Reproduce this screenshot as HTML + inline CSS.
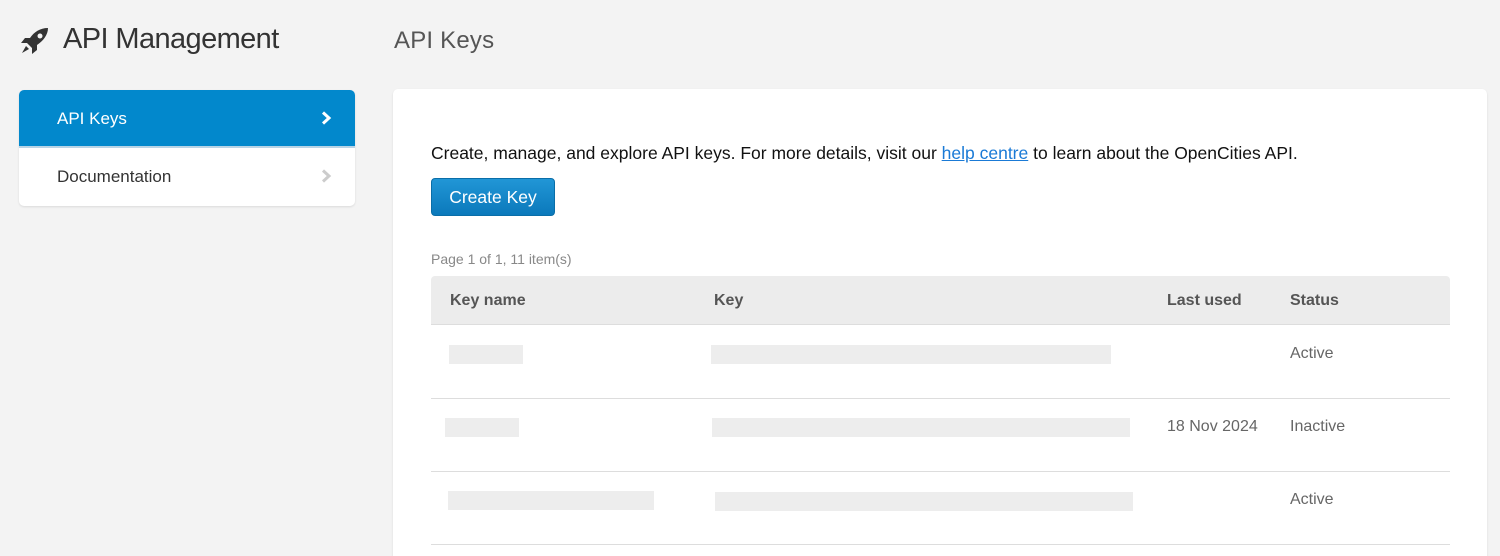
<!DOCTYPE html>
<html><head><meta charset="utf-8"><style>
*{box-sizing:border-box;margin:0;padding:0}
html,body{width:1500px;height:556px;overflow:hidden}
body{background:#f3f3f3;font-family:"Liberation Sans",sans-serif;position:relative}
.abs{position:absolute}
h1{position:absolute;left:63px;top:23px;font-size:29px;font-weight:normal;color:#333;letter-spacing:-0.6px}
h2{position:absolute;left:394px;top:27px;font-size:24px;font-weight:normal;color:#555;letter-spacing:0.2px}
.nav{left:19px;top:90px;width:336px;height:116px;background:#fff;border-radius:5px;box-shadow:0 1px 2px rgba(0,0,0,.1);overflow:hidden}
.nav .a{height:58px;background:#0288cc;color:#fff;font-size:17px;padding:19px 0 0 38px;border-bottom:2px solid #b8d4e6;position:relative}
.nav .b{height:58px;color:#333;font-size:17px;padding:19px 0 0 38px;position:relative}
.chev{position:absolute;right:22px;top:21px}
.card{left:393px;top:89px;width:1094px;height:480px;background:#fff;border-radius:5px;box-shadow:0 1px 2px rgba(0,0,0,.1)}
.p{left:431px;top:143px;font-size:17.5px;color:#111}
.p a{color:#1a7ad6;text-decoration:underline}
.btn{left:431px;top:178px;width:124px;height:38px;border-radius:4px;background:linear-gradient(#2196d6,#0b79bb);border:1px solid #0a6ea8;color:#fff;font-size:17.5px;text-align:center;line-height:36px}
.pg{left:431px;top:251px;font-size:14px;color:#888}
.th{left:431px;top:276px;width:1019px;height:49px;background:#ececec;border-radius:4px 4px 0 0;border-bottom:1px solid #ddd;font-size:16px;font-weight:bold;color:#555}
.th span{position:absolute;top:16px}
.row{left:431px;width:1019px;height:73px;border-bottom:1px solid #ddd}
.bar{position:absolute;background:#ededed;height:19px}
.st{position:absolute;font-size:16px;color:#666}
</style></head><body>
<svg class="abs" style="left:20px;top:27px" width="30" height="28" viewBox="0 0 30 28"><path d="M28 1C20 1 14 5 10 11L5 11 1 16 7 16 12 21 12 27 17 23 17 18C23 14 28 8 28 1Z" fill="#333"/><circle cx="20" cy="9" r="2.5" fill="#f3f3f3"/><path d="M6 19L2 26 9 22Z" fill="#333"/></svg>
<h1>API Management</h1>
<h2>API Keys</h2>
<div class="abs nav"><div class="a">API Keys<svg class="chev" width="12" height="14" viewBox="0 0 12 14"><path d="M2 1.5L8 7 2 12.5" stroke="#fff" stroke-width="3" fill="none"/></svg></div><div class="b">Documentation<svg class="chev" width="12" height="14" viewBox="0 0 12 14"><path d="M2 1.5L8 7 2 12.5" stroke="#ccc" stroke-width="3" fill="none"/></svg></div></div>
<div class="abs card"></div>
<div class="abs p">Create, manage, and explore API keys. For more details, visit our <a>help centre</a> to learn about the OpenCities API.</div>
<div class="abs btn">Create Key</div>
<div class="abs pg">Page 1 of 1, 11 item(s)</div>
<div class="abs th"><span style="left:19px">Key name</span><span style="left:283px">Key</span><span style="left:736px">Last used</span><span style="left:859px">Status</span></div>
<div class="abs row" style="top:326px"><div class="bar" style="left:18px;top:19px;width:74px"></div><div class="bar" style="left:280px;top:19px;width:400px"></div><div class="st" style="left:859px;top:19px">Active</div></div>
<div class="abs row" style="top:399px"><div class="bar" style="left:14px;top:19px;width:74px"></div><div class="bar" style="left:281px;top:19px;width:418px"></div><div class="st" style="left:736px;top:19px">18 Nov 2024</div><div class="st" style="left:859px;top:19px">Inactive</div></div>
<div class="abs row" style="top:472px"><div class="bar" style="left:17px;top:19px;width:206px"></div><div class="bar" style="left:284px;top:20px;width:418px"></div><div class="st" style="left:859px;top:19px">Active</div></div>
</body></html>
